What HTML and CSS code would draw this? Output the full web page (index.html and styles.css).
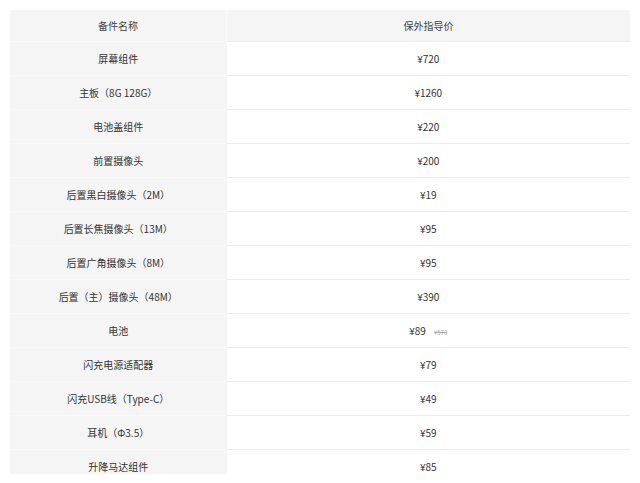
FILE: index.html
```html
<!DOCTYPE html>
<html lang="zh">
<head>
<meta charset="utf-8">
<link rel="stylesheet" href="styles.css">
</head>
<body>
<div class="page">
  <div class="clip">
    <table class="prices">
      <thead>
        <tr><th class="name">备件名称</th><th class="price">保外指导价</th></tr>
      </thead>
      <tbody>
        <tr><td class="name">屏幕组件</td><td class="price">¥720</td></tr>
        <tr><td class="name">主板（8G 128G）</td><td class="price">¥1260</td></tr>
        <tr><td class="name">电池盖组件</td><td class="price">¥220</td></tr>
        <tr><td class="name">前置摄像头</td><td class="price">¥200</td></tr>
        <tr><td class="name">后置黑白摄像头（2M）</td><td class="price">¥19</td></tr>
        <tr><td class="name">后置长焦摄像头（13M）</td><td class="price">¥95</td></tr>
        <tr><td class="name">后置广角摄像头（8M）</td><td class="price">¥95</td></tr>
        <tr><td class="name">后置（主）摄像头（48M）</td><td class="price">¥390</td></tr>
        <tr><td class="name">电池</td><td class="price">¥89<span class="old">¥570</span></td></tr>
        <tr><td class="name">闪充电源适配器</td><td class="price">¥79</td></tr>
        <tr><td class="name">闪充USB线（Type-C）</td><td class="price">¥49</td></tr>
        <tr><td class="name">耳机（Φ3.5）</td><td class="price">¥59</td></tr>
        <tr><td class="name">升降马达组件</td><td class="price">¥85</td></tr>
      </tbody>
    </table>
  </div>
</div>
</body>
</html>
```
FILE: styles.css
```css
html, body {
  margin: 0;
  padding: 0;
  background: #ffffff;
}
.page {
  padding: 10px 10px 0 10px;
}
.clip {
  width: 620px;
  height: 464px;
  overflow: hidden;
}
.prices {
  width: 620px;
  border-collapse: collapse;
  table-layout: fixed;
  font-family: "Noto Sans CJK SC", "Noto Sans", sans-serif;
  font-size: 10px;
  color: #333333;
}
.prices th, .prices td {
  padding: 0;
  text-align: center;
  font-weight: normal;
}
.prices th {
  height: 31px;
  background: #f5f5f5;
  color: #444444;
}
.prices th.name {
  width: 216px;
  border-right: 1px solid #fafafa;
}
.prices td {
  height: 33px;
  border-top: 1px solid #ededed;
}
.prices td.name {
  background: #f5f5f5;
  border-top-color: #f9f9f9;
}
.prices td.price {
  background: #ffffff;
}
.old {
  margin-left: 8px;
  font-size: 6px;
  color: #aaaaaa;
  text-decoration: line-through;
}
```
